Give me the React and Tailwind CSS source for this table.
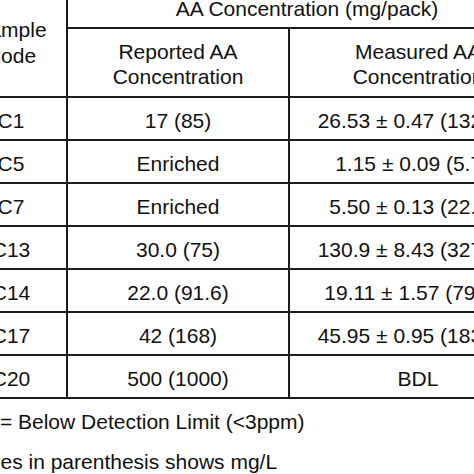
const ROWS = [
  ['C1', '17 (85)', '26.53 ± 0.47 (132.65)'],
  ['C5', 'Enriched', '1.15 ± 0.09 (5.75)'],
  ['C7', 'Enriched', '5.50 ± 0.13 (22.00)'],
  ['C13', '30.0 (75)', '130.9 ± 8.43 (327.25)'],
  ['C14', '22.0 (91.6)', '19.11 ± 1.57 (79.57)'],
  ['C17', '42 (168)', '45.95 ± 0.95 (183.80)'],
  ['C20', '500 (1000)', 'BDL'],
];

export default function App() {
  return (
    <div
      className="w-[474px] h-[474px] overflow-hidden bg-white text-[#111]"
      style={{ fontFamily: '"Liberation Sans", Arial, sans-serif' }}
    >
      <div className="ml-[-46px] mt-[-12px] w-[592px]">
        {/* table */}
        <div className="grid grid-cols-[110px_220px_256px] grid-rows-[37px_67px_repeat(7,41px)] gap-[2px] p-[2px] bg-[#1c1c1c] text-[21px]">
          <div className="row-span-2 bg-white flex items-center justify-center text-center leading-[26px]">
            Sample<br />Code
          </div>
          <div className="col-span-2 bg-white flex items-center justify-center leading-[25px]">
            AA Concentration (mg/pack)
          </div>
          <div className="bg-white flex items-center justify-center text-center leading-[25px] pt-[2px]">
            Reported AA<br />Concentration
          </div>
          <div className="bg-white flex items-center justify-center text-center leading-[25px] pt-[2px]">
            Measured AA<br />Concentration
          </div>
          {ROWS.map(([code, reported, measured]) => (
            <div key={code} className="contents">
              <div className="bg-white flex items-center justify-center pt-[3px] leading-[25px]">{code}</div>
              <div className="bg-white flex items-center justify-center pt-[3px] leading-[25px]">{reported}</div>
              <div className="bg-white flex items-center justify-center pt-[3px] leading-[25px] whitespace-nowrap">{measured}</div>
            </div>
          ))}
        </div>

        {/* notes */}
        <div className="mt-[3px] text-[21px] leading-[40px]">
          <p>BDL = Below Detection Limit (&lt;3ppm)</p>
          <p className="pl-[6px]">Values in parenthesis shows mg/L</p>
        </div>
      </div>
    </div>
  );
}
